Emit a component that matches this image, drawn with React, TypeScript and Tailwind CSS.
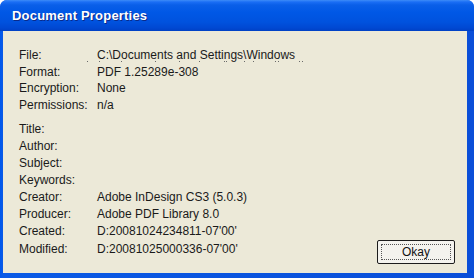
import React from "react";

const rowsA: [string, string][] = [
  ["File:", "C:\\Documents and Settings\\Windows"],
  ["Format:", "PDF 1.25289e-308"],
  ["Encryption:", "None"],
  ["Permissions:", "n/a"],
];
const rowsB: [string, string][] = [
  ["Title:", ""],
  ["Author:", ""],
  ["Subject:", ""],
  ["Keywords:", ""],
  ["Creator:", "Adobe InDesign CS3 (5.0.3)"],
  ["Producer:", "Adobe PDF Library 8.0"],
  ["Created:", "D:20081024234811-07'00'"],
  ["Modified:", "D:20081025000336-07'00'"],
];

const dots = [84, 96, 118, 152, 176, 196, 221, 223, 241, 250, 272, 275, 296, 299];

function Row({ k, v, h }: { k: string; v: string; h: string }) {
  return (
    <div className={`flex items-center ${h}`}>
      <div className="w-[78px] shrink-0">{k}</div>
      <div className="whitespace-nowrap">{v}</div>
    </div>
  );
}

export default function App() {
  return (
    <div className="w-[474px] h-[278px] bg-white overflow-hidden">
      <div
        className="w-full h-full flex flex-col rounded-t-[7px] overflow-hidden bg-[#0050e0]"
        style={{ fontFamily: '"Liberation Sans", Arial, sans-serif' }}
      >
        <div className="h-[31px] shrink-0 flex items-center pl-[12px] bg-[linear-gradient(180deg,#3d8cf7_0px,#1a6ef5_2px,#0a5fe8_5px,#0058e6_12px,#0052de_22px,#0048d2_28px,#0040c4_31px)]">
          <span className="text-white font-bold text-[13px] tracking-[0.2px] [text-shadow:1px_1px_0_#0a2a8a]">
            Document Properties
          </span>
        </div>
        <div className="flex-1 flex bg-[linear-gradient(90deg,#0058ee_0px,#0a5ae6_3px,#0a4ed8_100%)]">
          <div className="flex-1 ml-[3px] mr-[7px] mb-[5px] bg-[#ece9d8] text-[12px] text-[#1a1a1a] pl-[16px] pt-[16px] relative">
            {dots.map((x) => (
              <span
                key={x}
                className="absolute top-[30px] w-[1px] h-[1px] bg-[#6a6a6a]"
                style={{ left: x }}
              />
            ))}
            {rowsA.map(([k, v]) => (
              <Row key={k} k={k} v={v} h="h-[16.5px]" />
            ))}
            <div className="h-[7px]" />
            {rowsB.map(([k, v]) => (
              <Row key={k} k={k} v={v} h="h-[17.15px]" />
            ))}
            <div className="absolute right-[12px] bottom-[9px] w-[78px] h-[24px] border border-[#1c1c1c] bg-[#f4f3ee] rounded-[2px] flex items-center justify-center p-[3px]">
              <div className="w-full h-full border border-dotted border-[#555] flex items-center justify-center text-[12px] text-[#111]">
                Okay
              </div>
            </div>
          </div>
        </div>
      </div>
    </div>
  );
}
